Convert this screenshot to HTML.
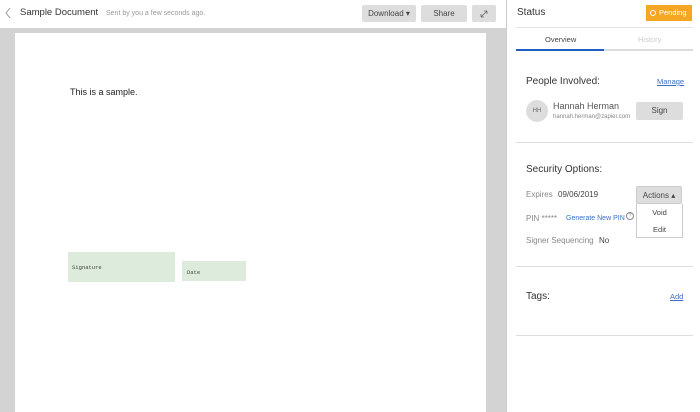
<!DOCTYPE html><html><head><style>
*{margin:0;padding:0;box-sizing:border-box}
body{width:700px;height:412px;overflow:hidden;background:#fff;font-family:"Liberation Sans","DejaVu Sans",sans-serif;color:#333;position:relative}
.a{position:absolute;white-space:nowrap}
.btn{position:absolute;background:#ddd;border-radius:2px;font-size:8px;color:#444;text-align:center}
.hr{position:absolute;height:1px;background:#ddd}
.lbl{font-size:10px;color:#333}
.mut{font-size:8px;color:#888}
.lnk{font-size:7.5px;color:#3a6fc4}
</style></head><body>
<div class="a" style="left:0;top:28px;width:506px;height:384px;background:#d3d3d3"></div>
<div class="a" style="left:15px;top:33px;width:471px;height:379px;background:#fff"></div>
<div class="a" style="left:506px;top:0;width:1px;height:412px;background:#ccc"></div>
<svg class="a" style="left:4px;top:7px" width="8" height="12"><path d="M6 1L2 6L6 11" fill="none" stroke="#999" stroke-width="1"/></svg>
<div class="a" style="left:20px;top:7px;font-size:9.5px;color:#333">Sample Document</div>
<div class="a" style="left:106px;top:10px;font-size:7px;color:#999">Sent by you a few seconds ago.</div>
<div class="btn" style="left:362px;top:5px;width:54px;height:17px;line-height:17px">Download ▾</div>
<div class="btn" style="left:421px;top:5px;width:46px;height:17px;line-height:17px">Share</div>
<div class="btn" style="left:472px;top:5px;width:24px;height:17px"><svg width="24" height="17"><path d="M9 12L15 6M9 12v-3M9 12h3M15 6v3M15 6h-3" fill="none" stroke="#666" stroke-width="0.8"/></svg></div>
<div class="a" style="left:70px;top:87px;font-size:9px;color:#222">This is a sample.</div>
<div class="a" style="left:68px;top:252px;width:107px;height:30px;background:#dcebdc;font-family:'Liberation Mono',monospace;font-size:5.5px;padding:12px 0 0 4px;color:#444">Signature</div>
<div class="a" style="left:182px;top:261px;width:64px;height:20px;background:#dcebdc;font-family:'Liberation Mono',monospace;font-size:5.5px;padding:8px 0 0 5px;color:#444">Date</div>
<div class="a" style="left:517px;top:7px;font-size:10px;color:#333">Status</div>
<div class="a" style="left:646px;top:5px;width:46px;height:16px;background:#f5a623;color:#fff;font-size:7.5px;line-height:16px;padding-left:4px;overflow:hidden"><span style="display:inline-block;width:6px;height:6px;border:1px solid #fff;border-radius:50%;vertical-align:-0.5px;margin-right:3px"></span>Pending</div>
<div class="hr" style="left:516px;top:27px;width:177px;background:#e4e4e4"></div>
<div class="a" style="left:545px;top:35px;font-size:7.5px;color:#444">Overview</div>
<div class="a" style="left:638px;top:35px;font-size:7.5px;color:#ccc">History</div>
<div class="a" style="left:516px;top:49px;width:88px;height:2px;background:#1f5fc4"></div>
<div class="a" style="left:604px;top:49px;width:89px;height:2px;background:#ddd"></div>
<div class="a lbl" style="left:526px;top:76px">People Involved:</div>
<div class="a lnk" style="left:657px;top:77px;text-decoration:underline">Manage</div>
<div class="a" style="left:526px;top:100px;width:22px;height:22px;border-radius:50%;background:#ddd;font-size:6px;line-height:22px;text-align:center;color:#666">HH</div>
<div class="a" style="left:553px;top:101px;font-size:9px;color:#555">Hannah Herman</div>
<div class="a" style="left:553px;top:114px;font-size:6px;color:#888">hannah.herman@zapier.com</div>
<div class="btn" style="left:636px;top:102px;width:47px;height:18px;line-height:18px">Sign</div>
<div class="hr" style="left:516px;top:142px;width:177px"></div>
<div class="a lbl" style="left:526px;top:164px">Security Options:</div>
<div class="a mut" style="left:526px;top:190px">Expires</div>
<div class="a" style="left:558px;top:190px;font-size:8px;color:#444">09/06/2019</div>
<div class="btn" style="left:636px;top:186px;width:46px;height:18px;line-height:17px;border:1px solid #ccc">Actions ▴</div>
<div class="a" style="left:636px;top:204px;width:47px;height:34px;border:1px solid #ccc;border-top:none;background:#fff;font-size:7.5px;color:#444;text-align:center;line-height:17px">Void<br>Edit</div>
<div class="a mut" style="left:526px;top:214px">PIN *****</div>
<div class="a lnk" style="left:566px;top:215px;font-size:7px">Generate New PIN</div>
<div class="a" style="left:626px;top:212px;width:8px;height:8px;border:1px solid #888;border-radius:50%;font-size:5.5px;line-height:6px;text-align:center;color:#888">?</div>
<div class="a mut" style="left:526px;top:236px">Signer Sequencing</div>
<div class="a" style="left:599px;top:236px;font-size:8px;color:#444">No</div>
<div class="hr" style="left:516px;top:266px;width:177px"></div>
<div class="a lbl" style="left:526px;top:291px">Tags:</div>
<div class="a lnk" style="left:670px;top:292px;text-decoration:underline">Add</div>
<div class="hr" style="left:516px;top:335px;width:177px"></div>
</body></html>
